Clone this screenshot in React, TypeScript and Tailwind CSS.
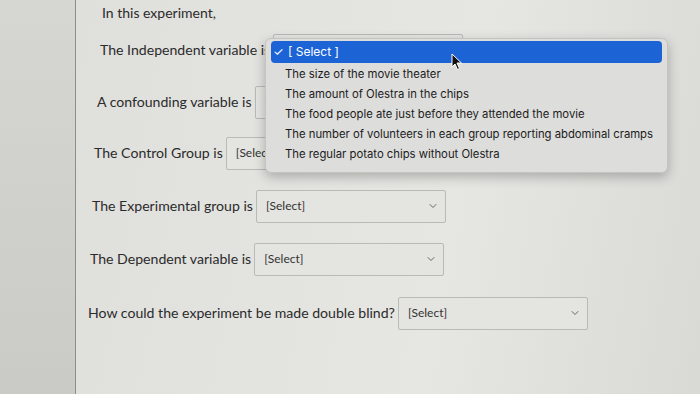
import { ChevronDown } from "lucide-react";

type Row = { label: string; indent: string; gap: string };

const rows: Row[] = [
  { label: "The Independent variable is", indent: "ml-[24px]", gap: "mt-[9px]" },
  { label: "A confounding variable is", indent: "ml-[21px]", gap: "mt-[18px]" },
  { label: "The Control Group is", indent: "ml-[18px]", gap: "mt-[17px]" },
  { label: "The Experimental group is", indent: "ml-[16px]", gap: "mt-[19px]" },
  { label: "The Dependent variable is", indent: "ml-[14px]", gap: "mt-[19px]" },
  { label: "How could the experiment be made double blind?", indent: "ml-[12px]", gap: "mt-[20px]" },
];

const options = [
  "The size of the movie theater",
  "The amount of Olestra in the chips",
  "The food people ate just before they attended the movie",
  "The number of volunteers in each group reporting abdominal cramps",
  "The regular potato chips without Olestra",
];

const SelectBox = () => (
  <div className="flex h-[33px] w-[190px] shrink-0 items-center justify-between rounded-[2px] border border-[#b9b9b6] bg-[#e4e4e1] pl-[9px] pr-[6px]">
    <span className="text-[12px] text-[#333]">[Select]</span>
    <ChevronDown className="h-[12px] w-[12px] text-[#666]" strokeWidth={2} />
  </div>
);

const Dropdown = () => (
  <div
    className="absolute left-[265px] top-[38px] w-[403px] rounded-[6px] border border-[#c4c4c1] bg-[#dddddb] px-[5px] pb-[8px] pt-[2px] shadow-[0_4px_12px_rgba(0,0,0,0.25)]"
    style={{ fontFamily: "Inter, 'Noto Sans', sans-serif" }}
  >
    <div className="flex h-[22px] items-center rounded-[4px] bg-[#1c63d6] pl-[2px] text-[12px] text-white">
      <span className="w-[15px]">✓</span>
      <span>[ Select ]</span>
    </div>
    <div className="flex flex-col whitespace-nowrap pl-[14px] pt-[1px] text-[11.3px] leading-[20px] text-[#1c1c1c]">
      {options.map(o => (
        <span key={o}>{o}</span>
      ))}
    </div>
  </div>
);

const Cursor = () => (
  <svg className="absolute left-[451px] top-[53px]" width="12" height="18" viewBox="0 0 12 18">
    <path d="M1 1 L1 14 L4 11 L6.5 16.5 L8.5 15.5 L6 10 L10.5 10 Z" fill="#111" stroke="#fff" strokeWidth="1" />
  </svg>
);

export default function App() {
  return (
    <div
      className="relative flex h-[394px] w-[700px] overflow-hidden bg-[#e2e2df]"
      style={{ fontFamily: "Lato, 'Open Sans', sans-serif" }}
    >
      <div className="h-full w-[76px] shrink-0 border-r border-[#8d8d8a] bg-[linear-gradient(180deg,#d6d6d3,#cacac7)]" />
      <div className="flex w-full flex-col bg-[linear-gradient(100deg,#dfdfdc,#e6e6e3_60%,#d9d9d6)]">
        <div className="ml-[26px] flex h-[24px] items-center text-[14px] text-[#2b2b2b]">In this experiment,</div>
        {rows.map(r => (
          <div key={r.label} className={`${r.gap} ${r.indent} flex h-[34px] items-center gap-[3px]`}>
            <span className="whitespace-nowrap text-[14.1px] text-[#2b2b2b]">{r.label}</span>
            <SelectBox />
          </div>
        ))}
      </div>
      <Dropdown />
      <Cursor />
    </div>
  );
}
